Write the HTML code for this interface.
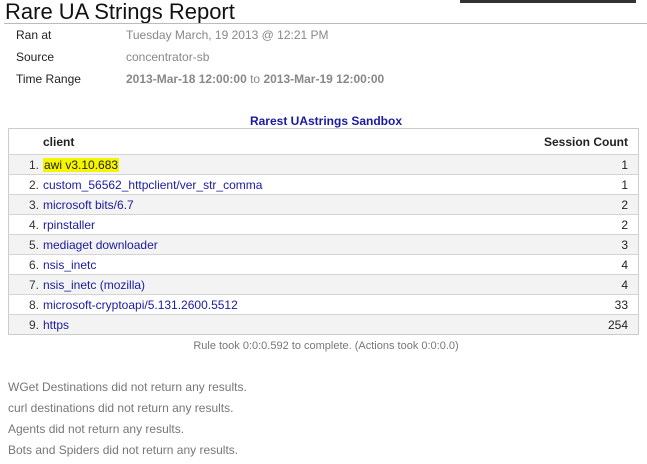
<!DOCTYPE html>
<html><head><style>
body{margin:0;width:647px;height:464px;background:#fff;font-family:"Liberation Sans",sans-serif;position:relative;overflow:hidden}
.a{position:absolute;white-space:nowrap}
.lbl{font-size:12px;color:#222}
.val{font-size:12px;color:#888}
table{position:absolute;left:8px;top:128px;width:631px;border:1px solid #ccc;border-collapse:collapse;font-size:12px}
td,th{height:19px;padding:0;border-top:1px solid #d4d4d4}
th{font-weight:bold;color:#222;height:25px;border-top:none}
td.n{width:30px;text-align:right;padding-right:4px;color:#333}
td.c a{color:#1a1aa0;text-decoration:none}
td.r{text-align:right;padding-right:10px;color:#222}
tr.g td{background:#f3f3f3}
.msg{font-size:12px;color:#777;left:8px}
</style></head><body>
<div class="a" style="left:460px;top:0;width:176px;height:3px;background:#333"></div>
<div class="a" style="left:5px;top:-1px;font-size:22px;color:#111">Rare UA Strings Report</div>
<div class="a" style="left:4px;top:23px;width:643px;height:1px;background:#bbb"></div>
<div class="a lbl" style="left:16px;top:28px">Ran at</div>
<div class="a val" style="left:126px;top:28px">Tuesday March, 19 2013 @ 12:21 PM</div>
<div class="a lbl" style="left:16px;top:50px">Source</div>
<div class="a val" style="left:126px;top:50px">concentrator-sb</div>
<div class="a lbl" style="left:16px;top:72px">Time Range</div>
<div class="a val" style="left:126px;top:72px"><b>2013-Mar-18 12:00:00</b> to <b>2013-Mar-19 12:00:00</b></div>
<div class="a" style="left:0;width:652px;text-align:center;top:114px;font-size:12px;font-weight:bold;color:#1a1aa0">Rarest UAstrings Sandbox</div>
<table>
<tr><th></th><th style="text-align:left">client</th><th style="text-align:right;padding-right:10px">Session Count</th></tr>
<tr class="g"><td class="n">1.</td><td class="c"><span style="background:#f5f500;color:#222;padding:0 1px">awi v3.10.683</span></td><td class="r">1</td></tr>
<tr><td class="n">2.</td><td class="c"><a>custom_56562_httpclient/ver_str_comma</a></td><td class="r">1</td></tr>
<tr class="g"><td class="n">3.</td><td class="c"><a>microsoft bits/6.7</a></td><td class="r">2</td></tr>
<tr><td class="n">4.</td><td class="c"><a>rpinstaller</a></td><td class="r">2</td></tr>
<tr class="g"><td class="n">5.</td><td class="c"><a>mediaget downloader</a></td><td class="r">3</td></tr>
<tr><td class="n">6.</td><td class="c"><a>nsis_inetc</a></td><td class="r">4</td></tr>
<tr class="g"><td class="n">7.</td><td class="c"><a>nsis_inetc (mozilla)</a></td><td class="r">4</td></tr>
<tr><td class="n">8.</td><td class="c"><a>microsoft-cryptoapi/5.131.2600.5512</a></td><td class="r">33</td></tr>
<tr class="g"><td class="n">9.</td><td class="c"><a>https</a></td><td class="r">254</td></tr>
</table>
<div class="a" style="left:0;width:652px;text-align:center;top:340px;font-size:11px;color:#777">Rule took 0:0:0.592 to complete. (Actions took 0:0:0.0)</div>
<div class="a msg" style="top:380px">WGet Destinations did not return any results.</div>
<div class="a msg" style="top:401px">curl destinations did not return any results.</div>
<div class="a msg" style="top:422px">Agents did not return any results.</div>
<div class="a msg" style="top:443px">Bots and Spiders did not return any results.</div>
</body></html>
